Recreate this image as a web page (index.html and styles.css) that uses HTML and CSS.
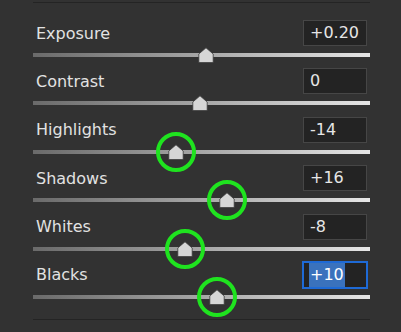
FILE: index.html
```html
<!DOCTYPE html>
<html>
<head>
  <title>Basic</title>
  <meta charset="UTF-8"/>
  <link rel="stylesheet" href="styles.css">
</head>
<body>
<div class="panel">
  <div class="rule top"></div>

  <div class="row">
    <div class="head">
      <span class="label">Exposure</span>
      <span class="value">+0.20</span>
    </div>
    <div class="slider">
      <div class="track"></div>
      <svg class="thumb" style="left: 165px" viewBox="0 0 16 17"><path d="M8 0.8 L15.2 7 V15.6 H0.8 V7 Z"/></svg>
    </div>
  </div>

  <div class="row">
    <div class="head">
      <span class="label">Contrast</span>
      <span class="value">0</span>
    </div>
    <div class="slider">
      <div class="track"></div>
      <svg class="thumb" style="left: 159px" viewBox="0 0 16 17"><path d="M8 0.8 L15.2 7 V15.6 H0.8 V7 Z"/></svg>
    </div>
  </div>

  <div class="row">
    <div class="head">
      <span class="label">Highlights</span>
      <span class="value">-14</span>
    </div>
    <div class="slider">
      <div class="track"></div>
      <svg class="thumb" style="left: 135px" viewBox="0 0 16 17"><path d="M8 0.8 L15.2 7 V15.6 H0.8 V7 Z"/></svg>
      <div class="ring" style="left: 135px"></div>
    </div>
  </div>

  <div class="row">
    <div class="head">
      <span class="label">Shadows</span>
      <span class="value">+16</span>
    </div>
    <div class="slider">
      <div class="track"></div>
      <svg class="thumb" style="left: 186px" viewBox="0 0 16 17"><path d="M8 0.8 L15.2 7 V15.6 H0.8 V7 Z"/></svg>
      <div class="ring" style="left: 186px"></div>
    </div>
  </div>

  <div class="row">
    <div class="head">
      <span class="label">Whites</span>
      <span class="value">-8</span>
    </div>
    <div class="slider">
      <div class="track"></div>
      <svg class="thumb" style="left: 144px" viewBox="0 0 16 17"><path d="M8 0.8 L15.2 7 V15.6 H0.8 V7 Z"/></svg>
      <div class="ring" style="left: 144px"></div>
    </div>
  </div>

  <div class="row">
    <div class="head">
      <span class="label">Blacks</span>
      <span class="value active"><span class="sel">+10</span></span>
    </div>
    <div class="slider">
      <div class="track"></div>
      <svg class="thumb" style="left: 176px" viewBox="0 0 16 17"><path d="M8 0.8 L15.2 7 V15.6 H0.8 V7 Z"/></svg>
      <div class="ring" style="left: 176px"></div>
    </div>
  </div>

  <div class="rule bottom"></div>
</div>
</body>
</html>
```

FILE: styles.css
```css
* {
  box-sizing: border-box;
}

body {
  margin: 0;
  background-color: #323232;
  font-family: "DejaVu Sans", "Liberation Sans", sans-serif;
  font-size: 16px;
  color: #e2e2e2;
  overflow: hidden;
}

/* 面板 */
.panel {
  width: 337px;
  margin-left: 33px;
  padding-top: 2px;
}

.rule {
  height: 1px;
  background-color: #242424;
}

.rule.top {
  margin-bottom: 14px;
}

.rule.bottom {
  margin-top: 12px;
}

.row {
  height: 48.4px;
}

.head {
  height: 32px;
  display: flex;
  align-items: center;
  justify-content: space-between;
}

.label {
  padding-left: 3px;
}

.value {
  width: 64px;
  height: 26px;
  margin-right: 3px;
  background-color: #232323;
  border: 1px solid #464646;
  padding-left: 6px;
  line-height: 24px;
  color: #e6e6e6;
}

.value.active {
  border: 2px solid #1e6ad6;
  width: 66px;
  height: 28px;
  margin-right: 2px;
  padding-left: 5px;
  line-height: 24px;
}

.sel {
  display: inline-block;
  background-color: #3a72bd;
  color: #fff;
  padding: 0 1px;
}

/* 滑块 */
.slider {
  position: relative;
  height: 12px;
  margin-top: 4px;
}

.track {
  height: 4px;
  background: linear-gradient(to right, #6a6a6a, #9a9a9a 40%, #e6e6e6);
}

.thumb {
  position: absolute;
  top: -6px;
  width: 16px;
  height: 17px;
}

.thumb path {
  fill: #d6d6d6;
  stroke: #3a3a3a;
  stroke-width: 0.8;
  stroke-linejoin: round;
}

.ring {
  position: absolute;
  top: -18px;
  width: 40px;
  height: 40px;
  margin-left: -12px;
  border: 4px solid #1fe31f;
  border-radius: 50%;
}
```
